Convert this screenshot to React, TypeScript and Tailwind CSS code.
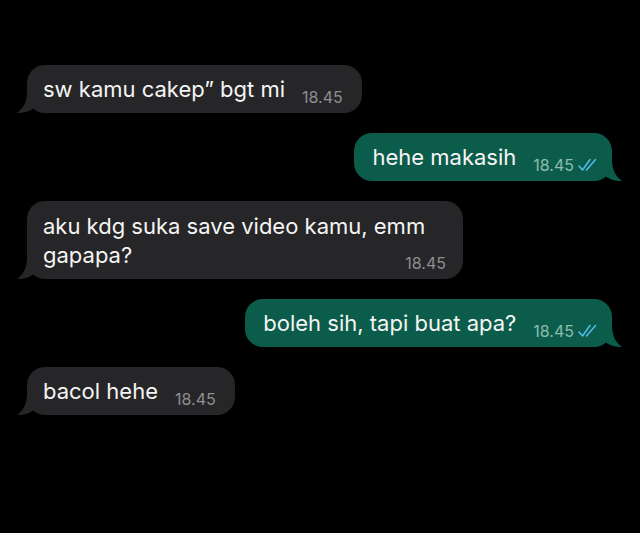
import type { ReactNode } from 'react';

type Msg = { lines: string[]; time: string; out: boolean; width?: string };

const messages: Msg[] = [
  { lines: ['sw kamu cakep” bgt mi'], time: '18.45', out: false },
  { lines: ['hehe makasih'], time: '18.45', out: true },
  { lines: ['aku kdg suka save video kamu, emm', 'gapapa?'], time: '18.45', out: false, width: 'w-[436px]' },
  { lines: ['boleh sih, tapi buat apa?'], time: '18.45', out: true },
  { lines: ['bacol hehe'], time: '18.45', out: false },
];

function Tail({ out }: { out: boolean }) {
  return (
    <svg
      width="28"
      height="22"
      viewBox="0 0 28 22"
      className={out ? 'absolute -right-[10px] bottom-0 -scale-x-100' : 'absolute -left-[10px] bottom-0'}
    >
      <path
        d="M10 0 C10 10 7 17 0 22 C7 22 13 20 17 17 C19 19 22 21 28 22 L28 0 Z"
        fill={out ? '#0b5c4a' : '#262628'}
      />
    </svg>
  );
}

function Ticks() {
  return (
    <svg width="19" height="14" viewBox="0 0 19 14" className="ml-[4px] mb-[2px]">
      <path d="M1 8 L4.5 12 L12 1.5" fill="none" stroke="#53bdeb" strokeWidth="1.5" strokeLinecap="round" strokeLinejoin="round" />
      <path d="M8.5 12 L17.5 1.5" fill="none" stroke="#53bdeb" strokeWidth="1.5" strokeLinecap="round" />
    </svg>
  );
}

function Bubble({ m }: { m: Msg }) {
  const bg = m.out ? 'bg-[#0b5c4a]' : 'bg-[#262628]';
  const timeColor = m.out ? 'text-[#8dbdaf]' : 'text-[#8e8e93]';
  const time = (
    <span className={`ml-[17px] mb-[-3px] flex items-end text-[16px] leading-[18px] ${timeColor}`}>
      {m.time}
      {m.out && <Ticks />}
    </span>
  );
  let body: ReactNode;
  if (m.lines.length > 1) {
    // wrapped message: time sits at the bottom right of the last line
    body = (
      <div className={`${m.width} pl-[16px] pr-[17px] pt-[10px] pb-[10px]`}>
        {m.lines.slice(0, -1).map((l, i) => (
          <div key={i} className="text-[22px] leading-[30px]">{l}</div>
        ))}
        <div className="flex items-end justify-between">
          <span className="text-[22px] leading-[28px]">{m.lines[m.lines.length - 1]}</span>
          {time}
        </div>
      </div>
    );
  } else {
    body = (
      <div className={`flex items-end ${m.out ? 'pl-[18px] pr-[15px]' : 'pl-[16px] pr-[19px]'} pt-[10px] pb-[10px]`}>
        <span className="text-[22px] leading-[28px]">{m.lines[0]}</span>
        {time}
      </div>
    );
  }
  return (
    <div className={`flex ${m.out ? 'justify-end pr-[28px]' : 'justify-start pl-[27px]'}`}>
      <div className={`relative rounded-[18px] text-[#f5f5f5] ${bg}`}>
        <Tail out={m.out} />
        <div className="relative">{body}</div>
      </div>
    </div>
  );
}

export default function App() {
  return (
    <div className="w-[640px] h-[533px] bg-black overflow-hidden" style={{ fontFamily: 'Inter, "Liberation Sans", sans-serif' }}>
      <div className="flex flex-col gap-[20px] pt-[65px]">
        {messages.map((m, i) => (
          <Bubble key={i} m={m} />
        ))}
      </div>
    </div>
  );
}
